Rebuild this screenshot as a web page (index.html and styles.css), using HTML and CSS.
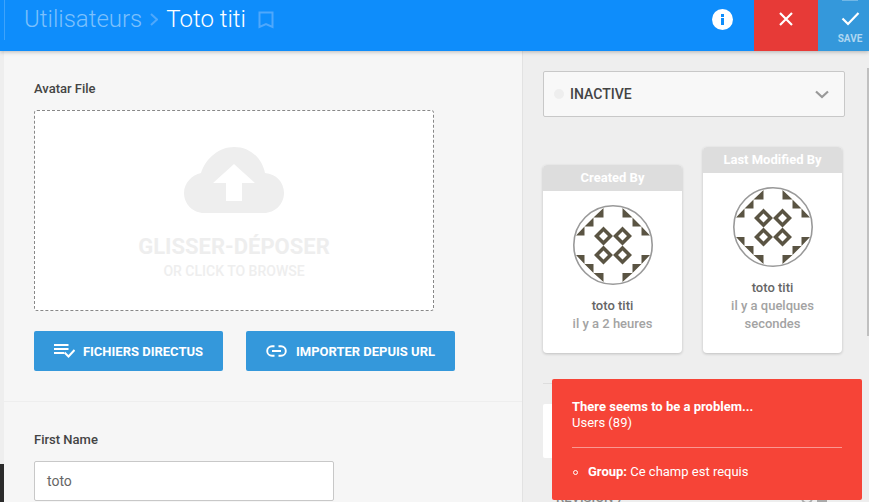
FILE: index.html
```html
<!DOCTYPE html>
<html lang="fr">
<head>
<meta charset="utf-8">
<title>Utilisateurs</title>
<link rel="stylesheet" href="styles.css">
</head>
<body>
<svg class="defs" width="0" height="0" aria-hidden="true">
  <symbol id="avatar" viewBox="0 0 80 80">
    <g fill="#5a5443">
      <path d="M30.500 3V12.500H20.500zM20.500 12.500V21.500H11.500zM11.500 21.500V30.500H3z"/>
      <path d="M49.500 3V12.500H59.500zM59.500 12.500V21.500H68.500zM68.500 21.500V30.500H77z"/>
      <path d="M3 50H11.500V59zM11.500 59H20.500V68zM20.500 68H30.500V77z"/>
      <path d="M77 50H68.500V59zM68.500 59H59.500V68zM59.500 68H49.500V77z"/>
      <path fill-rule="evenodd" d="M30.500 21.500l9.500 9.500-9.500 9.500-9.500-9.500zM30.500 26.500l-4.500 4.500 4.500 4.500 4.500-4.500zM49.500 21.500l9.500 9.500-9.500 9.500-9.500-9.500zM49.500 26.500l-4.500 4.500 4.500 4.500 4.500-4.500zM30.500 40.500l9.500 9.500-9.500 9.500-9.500-9.500zM30.500 45.500l-4.500 4.500 4.500 4.500 4.500-4.500zM49.500 40.500l9.500 9.500-9.500 9.500-9.500-9.500zM49.500 45.500l-4.500 4.500 4.500 4.500 4.500-4.500z"/>
    </g>
    <circle cx="40" cy="40" r="39.200" fill="none" stroke="#999" stroke-width="1.600"/>
  </symbol>
</svg>
<div class="app">
  <header class="topbar">
    <div class="crumbs">
      <span class="crumb-parent">Utilisateurs</span>
      <svg class="crumb-sep" width="8" height="13" viewBox="0 0 8 13"><path d="M1 1l6 5.500-6 5.500" fill="none" stroke="currentColor" stroke-width="2"/></svg>
      <span class="crumb-current">Toto titi</span>
      <svg class="bookmark" width="16" height="18" viewBox="0 0 16 18"><path d="M1.500 1.500h13v14.500l-6.500-3-6.500 3z" fill="none" stroke="currentColor" stroke-width="2"/></svg>
    </div>
    <div class="actions">
      <svg class="info" width="21" height="21" viewBox="0 0 21 21"><circle cx="10.500" cy="10.500" r="10.500" fill="#fff"/><rect x="9" y="9" width="3" height="7" fill="#0e8dfb"/><rect x="9" y="5" width="3" height="3" fill="#0e8dfb"/></svg>
      <div class="btn-close"><svg width="16" height="16" viewBox="0 0 16 16"><path d="M2 2l12 12M14 2l-12 12" stroke="#fff" stroke-width="2.200" fill="none"/></svg></div>
      <div class="btn-save">
        <span class="save-dots"></span>
        <svg width="19" height="15" viewBox="0 0 19 15"><path d="M1.500 7.500l5.500 5.500 10.500-11" stroke="#fff" stroke-width="2.200" fill="none"/></svg>
        <span class="save-text">SAVE</span>
      </div>
    </div>
  </header>
  <div class="body">
    <main class="form">
      <section class="form-section first">
        <label class="label">Avatar File</label>
        <div class="dropzone">
          <svg class="cloud" width="100" height="66" viewBox="0 0 100 66"><path d="M20 66C9 66 0 57 0 46c0-10 8-18 17-20C22 11 35 0 50 0c16 0 28 11 31 26 11 1 19 9 19 20 0 11-9 20-20 20z" fill="#eee"/><path d="M50 17L71 36H58V54H42V36H29z" fill="#fff"/></svg>
          <div class="drop-title">GLISSER-DÉPOSER</div>
          <div class="drop-sub">OR CLICK TO BROWSE</div>
        </div>
        <div class="buttons">
          <div class="btn btn-files">
            <svg width="21" height="14" viewBox="0 0 21 14"><path d="M0 1h14.500M0 5h14.500M0 9h10" stroke="#fff" stroke-width="1.800" fill="none"/><path d="M10.500 8.500l4 4 6-6.500" stroke="#fff" stroke-width="2" fill="none"/></svg>
            <span>FICHIERS DIRECTUS</span>
          </div>
          <div class="btn btn-url">
            <svg width="21" height="12" viewBox="0 0 21 12"><path d="M8.500 1.200H6a4.800 4.800 0 0 0 0 9.600h2.500M12.500 1.200H15a4.800 4.800 0 0 1 0 9.600h-2.500M6 6h9" stroke="#fff" stroke-width="1.900" fill="none"/></svg>
            <span>IMPORTER DEPUIS URL</span>
          </div>
        </div>
      </section>
      <section class="form-section">
        <label class="label">First Name</label>
        <div class="input">toto</div>
      </section>
    </main>
    <aside class="side">
      <div class="status">
        <span class="dot"></span>
        <span class="status-text">INACTIVE</span>
        <svg class="chev" width="14" height="9" viewBox="0 0 14 9"><path d="M1 1.500l6 5.500 6-5.500" stroke="#999" stroke-width="2.200" fill="none"/></svg>
      </div>
      <div class="cards">
        <div class="card card-low">
          <div class="card-head">Created By</div>
          <div class="card-body">
            <svg class="avatar"><use href="#avatar"/></svg>
            <div class="who">toto titi</div>
            <div class="when">il y a 2 heures</div>
          </div>
        </div>
        <div class="card">
          <div class="card-head">Last Modified By</div>
          <div class="card-body">
            <svg class="avatar"><use href="#avatar"/></svg>
            <div class="who">toto titi</div>
            <div class="when">il y a quelques secondes</div>
          </div>
        </div>
      </div>
      <div class="rule"></div>
      <div class="box-under"></div>
      <div class="revision">
        <span>REVISION 7</span>
        <svg width="28" height="12" viewBox="0 0 28 12"><circle cx="6" cy="6" r="5" fill="none" stroke="#aaa" stroke-width="2"/><path d="M16 6h10" stroke="#aaa" stroke-width="8"/></svg>
      </div>
    </aside>
  </div>
  <div class="toast">
    <div class="toast-title">There seems to be a problem...</div>
    <div class="toast-sub">Users (89)</div>
    <div class="toast-rule"></div>
    <ul class="toast-list"><li><b>Group:</b> Ce champ est requis</li></ul>
  </div>
  <div class="corner"></div>
  <div class="scroll-thumb"></div>
</div>
</body>
</html>
```
FILE: styles.css
```css
*, *::before { box-sizing: border-box; }
html, body { margin: 0; height: 100%; overflow: hidden; }
body { font-family: Roboto, "Liberation Sans", sans-serif; background: #eeeeee; color: #333; }
.defs { position: absolute; }
.app { position: relative; width: 869px; height: 502px; overflow: hidden; display: flex; flex-direction: column; }
.topbar { height: 51px; flex: none; background: #0e8dfb; display: flex; box-shadow: 0 1px 4px rgba(0,0,0,.25); position: relative; z-index: 2; }
.topbar::before { content: ""; position: absolute; left: 4px; top: 0; width: 1px; height: 40px; background: rgba(255,255,255,.2); }
.crumbs { flex: 0 0 712px; display: flex; align-items: center; padding-left: 24px; padding-bottom: 14px; }
.crumb-parent { font-size: 24px; font-weight: 300; color: #7cc0fc; }
.crumb-sep { color: #4fa8fb; margin: 1px 8px 0 8px; }
.crumb-current { font-size: 24px; font-weight: 300; color: #fff; }
.bookmark { color: #4fa8fb; margin-left: 12px; margin-top: 2px; }
.actions { display: flex; align-items: stretch; flex: none; }
.info { margin-top: 9px; margin-right: 21px; }
.btn-close { width: 64px; background: #e73a37; display: flex; align-items: flex-start; justify-content: center; padding-top: 11px; }
.btn-save { width: 64px; background: #3498db; display: flex; flex-direction: column; align-items: center; padding-top: 11px; position: relative; }
.save-dots { position: absolute; top: 0; left: 24px; width: 16px; height: 1px; background: #aed6f1; opacity: .5; }
.save-text { font-size: 10px; font-weight: 700; color: #aed6f1; margin-top: 7px; }
.body { flex: 1; display: flex; min-height: 0; }
.form { width: 518px; margin-left: 4px; background: #f6f6f6; flex: none; }
.form-section { padding: 0 30px; }
.form-section.first { padding-top: 30px; height: 351px; border-bottom: 1px solid #eeeeee; }
.form-section + .form-section { padding-top: 30px; }
.label { display: block; font-size: 13px; font-weight: 500; line-height: 15px; color: #444; }
.dropzone { width: 400px; height: 201px; margin-top: 14px; background: #fff; border: 1px dashed #888; border-radius: 3px; display: flex; flex-direction: column; align-items: center; padding-top: 36px; }
.drop-title { font-size: 22px; font-weight: 700; color: #eeeeee; line-height: 25px; margin-top: 21px; }
.drop-sub { font-size: 14px; font-weight: 500; color: #eeeeee; line-height: 15px; margin-top: 5px; }
.buttons { display: flex; gap: 23px; margin-top: 20px; }
.btn { height: 40px; background: #3498db; color: #fff; border-radius: 2px; display: flex; align-items: center; justify-content: center; font-size: 13px; font-weight: 700; }
.btn-files { width: 189px; gap: 8px; }
.btn-url { width: 209px; gap: 9px; }
.input { margin-top: 14px; width: 300px; height: 40px; background: #fff; border: 1px solid #c8c8c8; border-radius: 2px; padding: 0 12px; line-height: 39px; font-size: 14px; color: #666; }
.side { flex: 1; padding: 20px 24px 0 20px; background: #eeeeee; border-left: 1px solid #e2e2e2; }
.status { height: 46px; width: 302px; background: #f8f8f8; border: 1px solid #c8c8c8; border-radius: 2px; display: flex; align-items: center; padding: 0 15px 0 10px; margin-bottom: 30px; }
.dot { width: 10px; height: 10px; border-radius: 50%; background: #eeeeee; margin-right: 6px; }
.status-text { flex: 1; font-size: 14px; font-weight: 500; color: #444; line-height: 16px; }
.cards { display: flex; align-items: flex-end; gap: 21px; height: 206px; }
.card { width: 139px; height: 206px; background: #fff; border-radius: 4px; overflow: hidden; box-shadow: 0 1px 3px rgba(0,0,0,.2); }
.card-low { height: 188px; }
.card-head { height: 26px; background: #dddddd; color: #fff; font-size: 13px; font-weight: 700; text-align: center; line-height: 25px; }
.card-body { display: flex; flex-direction: column; align-items: center; padding: 14px 12px 0; text-align: center; font-size: 13px; line-height: 18px; font-weight: 500; }
.avatar { width: 80px; height: 80px; display: block; margin-bottom: 12px; }
.who { color: #666; }
.when { color: #a3a3a3; }
.rule { height: 1px; background: #ddd; margin-top: 30px; }
.box-under { width: 302px; height: 54px; margin-top: 20px; background: #fff; border-radius: 2px; }
.revision { margin-top: 32px; padding: 0 16px 0 13px; font-size: 13px; font-weight: 500; line-height: 15px; color: #888; display: flex; justify-content: space-between; align-items: center; }
.toast { position: absolute; left: 552px; top: 379px; width: 310px; height: 121px; background: #f64437; border-radius: 2px; color: #fff; padding: 20px 20px 0; font-size: 13px; line-height: 16px; z-index: 3; }
.toast-title { font-weight: 700; }
.toast-sub { font-weight: 400; }
.toast-rule { height: 1px; background: rgba(255,255,255,.45); margin-top: 16px; }
.toast-list { list-style: none; margin: 16px 0 0; padding: 0 0 0 16px; position: relative; }
.toast-list li::before { content: ""; position: absolute; left: 1px; top: 6px; width: 5px; height: 5px; border: 1px solid #fff; border-radius: 50%; }
.corner { position: absolute; left: 0; top: 464px; width: 4px; height: 38px; background: #2b2b2b; z-index: 1; }
.scroll-thumb { position: absolute; right: 0; top: 68px; width: 2px; height: 268px; background: #c0c0c0; z-index: 1; }
```
